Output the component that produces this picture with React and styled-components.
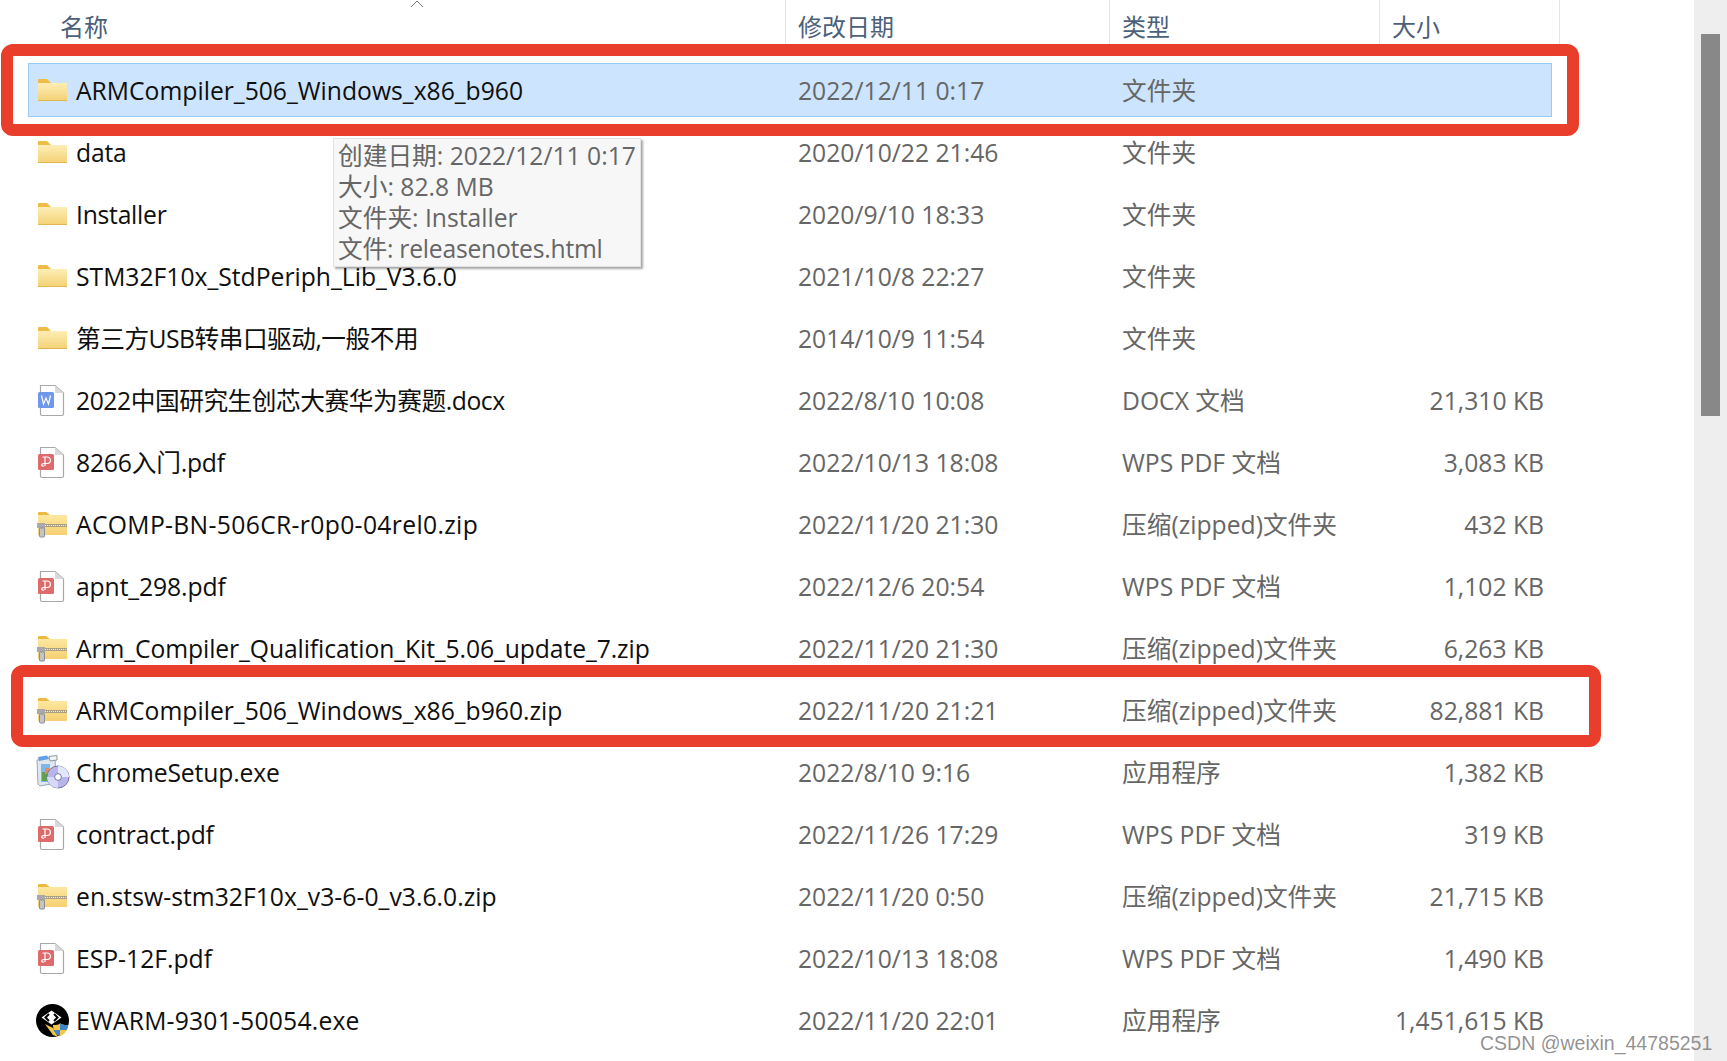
import React from 'react';
import styled, { createGlobalStyle } from 'styled-components';

const GlobalStyle = createGlobalStyle`
  html, body {
    margin: 0;
    padding: 0;
    background: #fff;
  }
`;

const Page = styled.div`
  position: relative;
  display: flex;
  width: 1727px;
  height: 1061px;
  overflow: hidden;
  background: #fff;
  font-family: "Open Sans", "Noto Sans CJK SC", sans-serif;
  font-size: 24.7px;
`;

const Explorer = styled.div`
  flex: 1;
  min-width: 0;
`;

const Header = styled.div`
  display: grid;
  grid-template-columns: 786px 324px 270px 180px;
  height: 44px;
  margin-bottom: 15px;
`;

const HeaderCell = styled.div`
  position: relative;
  display: flex;
  align-items: center;
  box-sizing: border-box;
  padding: 7px 0 0 ${(p) => p.$pad || 12}px;
  border-right: 1px solid #e5e5e5;
  color: #4c607a;
  font-size: 24px;
  white-space: nowrap;
`;

const SortCaret = styled.svg`
  position: absolute;
  left: 410px;
  top: 0;
  width: 14px;
  height: 8px;
`;

const List = styled.div`
  display: flex;
  flex-direction: column;
  gap: 8px;
  padding: 4px 0 0 28px;
`;

const Row = styled.div`
  display: grid;
  grid-template-columns: 38px 722px 324px 1fr auto;
  align-items: center;
  box-sizing: border-box;
  width: 1524px;
  height: 54px;
  padding: 0 7px 0 9px;
  border: 1px solid ${(p) => (p.$selected ? '#99c9f5' : 'transparent')};
  background: ${(p) => (p.$selected ? '#cce4fd' : 'transparent')};
  line-height: 36px;
`;

const IconSlot = styled.div`
  display: flex;
  align-items: center;
  height: 36px;
`;

const Name = styled.div`
  padding-top: 2px;
  color: #0f0f0f;
  letter-spacing: ${(p) => p.$tracking || 0}px;
  white-space: nowrap;
`;

const Meta = styled.div`
  padding-top: 2px;
  color: #666;
  white-space: nowrap;
`;

const ScrollTrack = styled.div`
  flex: none;
  width: 33px;
  padding: 34px 7px 0;
  box-sizing: border-box;
  background: #eeeeee;
`;

const ScrollThumb = styled.div`
  width: 19px;
  height: 382px;
  background: #888;
`;

const Annotation = styled.div`
  position: absolute;
  box-sizing: border-box;
  left: ${(p) => p.$left}px;
  top: ${(p) => p.$top}px;
  width: ${(p) => p.$width}px;
  height: ${(p) => p.$height}px;
  border: 12px solid #ea3e2d;
  border-radius: 12px;
`;

const Tooltip = styled.div`
  position: absolute;
  left: 333px;
  top: 138px;
  box-sizing: border-box;
  width: 308px;
  height: 129px;
  padding: 1px 0 0 4px;
  border: 1px solid #e2e2e2;
  background: #f7f7f7;
  box-shadow: 2px 2px 2px rgba(0, 0, 0, 0.35);
  color: #666;
  line-height: 31px;
  white-space: nowrap;
`;

const TooltipTight = styled.span`
  letter-spacing: -0.24px;
`;

const Watermark = styled.div`
  position: absolute;
  left: 1480px;
  top: 1031px;
  color: rgba(110, 110, 110, 0.75);
  font-family: "Liberation Sans", sans-serif;
  font-size: 19.5px;
  line-height: 24px;
  white-space: nowrap;
`;

const ShiftedSvg = styled.svg`
  flex: none;
  margin-left: ${(p) => p.$shift || 0}px;
`;

const FolderIcon = () => (
  <svg width="29" height="24" viewBox="0 0 29 24">
    <defs>
      <linearGradient id="folderBody" x1="0" y1="0" x2="0" y2="1">
        <stop offset="0" stopColor="#fdeeb5" />
        <stop offset="1" stopColor="#f4d175" />
      </linearGradient>
    </defs>
    <path d="M0 2 Q0 1 1 1 H9 L13 5 H29 V8 H0 Z" fill="#efbd46" />
    <rect x="0" y="5" width="29" height="18" fill="url(#folderBody)" />
    <rect x="0" y="22" width="29" height="1" fill="#e2b650" />
  </svg>
);

const ZipIcon = () => (
  <ShiftedSvg $shift={-1} width="30" height="27" viewBox="0 0 30 27">
    <defs>
      <linearGradient id="zipBody" x1="0" y1="0" x2="0" y2="1">
        <stop offset="0" stopColor="#fde7a0" />
        <stop offset="1" stopColor="#f5d070" />
      </linearGradient>
    </defs>
    <path d="M1 2 Q1 1 2 1 H9 L13 4 H30 V8 H1 Z" fill="#efb93f" />
    <rect x="1" y="4" width="29" height="20" fill="url(#zipBody)" />
    <rect x="5" y="13" width="25" height="3" fill="#a89f84" />
    <path d="M6 14.5 H30" stroke="#f5f1e4" strokeWidth="1" strokeDasharray="1 1" />
    <rect x="0" y="12" width="8" height="5" fill="#a9a9a9" />
    <rect x="2.5" y="17" width="5" height="9" rx="1" fill="#c4c4c4" stroke="#8e8e8e" />
  </ShiftedSvg>
);

const DocIcon = ({ color, children }) => (
  <svg width="28" height="33" viewBox="0 0 28 33">
    <path d="M2.5 1.5 H17 L25.5 9 V30 Q25.5 31.5 24 31.5 H4 Q2.5 31.5 2.5 30 Z" fill="#fff" stroke="#a8a8a8" strokeWidth="1.2" />
    <path d="M17 1.5 V9 H25.5 Z" fill="#d9d9d9" />
    <rect x="0" y="8" width="16" height="16" rx="1.5" fill={color} />
    {children}
  </svg>
);

const WordIcon = () => (
  <DocIcon color="#6f97ea">
    <path d="M3.5 11.5 L5.5 20 L8 14 L10.5 20 L12.5 11.5" fill="none" stroke="#fff" strokeWidth="1.2" />
  </DocIcon>
);

const PdfIcon = () => (
  <DocIcon color="#df6a6a">
    <path d="M6 20 C3 21 3 17.5 6 17.5 H9 C13.5 17.5 13.5 11 9 11 H4.5 M7 11 V20" fill="none" stroke="#fff" strokeWidth="1.2" />
  </DocIcon>
);

const SetupIcon = () => (
  <ShiftedSvg $shift={-2} width="34" height="34" viewBox="0 0 34 34">
    <path d="M1 5 L19 2 L20 28 L4 31 L2 29 Z" fill="#dfe7ef" stroke="#9aa7b4" />
    <path d="M2 2 L11 0.5 L13 4 L3 6 Z" fill="#5f9fe3" />
    <path d="M13 1.5 L21 0.5 L21 5 L14 6 Z" fill="#f3f5f7" stroke="#8a97a4" />
    <rect x="5" y="9" width="9" height="18" fill="#7fb8e8" />
    <rect x="6" y="17" width="6" height="9" fill="#5fa051" />
    <rect x="9" y="13" width="4" height="6" fill="#e28a62" />
    <circle cx="22" cy="22" r="11" fill="#b9b5ea" stroke="#6f78a6" />
    <path d="M22 11 A11 11 0 0 1 33 22 L22 22 Z" fill="#e4e6fb" />
    <path d="M22 33 A11 11 0 0 1 11 22 L22 22 Z" fill="#d7d8f5" />
    <circle cx="22" cy="22" r="3.4" fill="#fff" stroke="#6f78a6" />
  </ShiftedSvg>
);

const EwarmIcon = () => (
  <ShiftedSvg $shift={-2} width="33" height="33" viewBox="0 0 33 33">
    <circle cx="16.5" cy="16.5" r="16.5" fill="#000" />
    <path d="M15.5 6.5 L25.5 13.5 L15.5 20.5 L5.5 13.5 Z" fill="#fff" />
    <path d="M13 10 L9.5 13.5 L13 17 M18 10 L21.5 13.5 L18 17" fill="none" stroke="#000" strokeWidth="2" />
    <path d="M9 20 L17 24 L22 33 L17 31 Z" fill="#f2c64a" />
    <path d="M17 21 Q24 21 24 19 Q25 21 32 21 C32 26 29 30 24 32 C19 30 17 26 17 21 Z" fill="#f2c64a" />
    <path d="M24 19 Q25 21 32 21 C32 23 31.5 25 30.5 26 H24 Z M17.5 26 H24 V32 C21 31 18.5 29 17.5 26 Z" fill="#3f86cc" />
  </ShiftedSvg>
);

const icons = {
  folder: FolderIcon,
  zip: ZipIcon,
  word: WordIcon,
  pdf: PdfIcon,
  setup: SetupIcon,
  ewarm: EwarmIcon,
};

const files = [
  { icon: 'folder', name: 'ARMCompiler_506_Windows_x86_b960', date: '2022/12/11 0:17', type: '文件夹', selected: true },
  { icon: 'folder', name: 'data', date: '2020/10/22 21:46', type: '文件夹', tracking: -0.2 },
  { icon: 'folder', name: 'Installer', date: '2020/9/10 18:33', type: '文件夹', tracking: -0.24 },
  { icon: 'folder', name: 'STM32F10x_StdPeriph_Lib_V3.6.0', date: '2021/10/8 22:27', type: '文件夹' },
  { icon: 'folder', name: '第三方USB转串口驱动,一般不用', date: '2014/10/9 11:54', type: '文件夹', tracking: -0.5 },
  { icon: 'word', name: '2022中国研究生创芯大赛华为赛题.docx', date: '2022/8/10 10:08', type: 'DOCX 文档', size: '21,310 KB', tracking: -0.45 },
  { icon: 'pdf', name: '8266入门.pdf', date: '2022/10/13 18:08', type: 'WPS PDF 文档', size: '3,083 KB', tracking: -0.2 },
  { icon: 'zip', name: 'ACOMP-BN-506CR-r0p0-04rel0.zip', date: '2022/11/20 21:30', type: '压缩(zipped)文件夹', size: '432 KB', tracking: 0.33 },
  { icon: 'pdf', name: 'apnt_298.pdf', date: '2022/12/6 20:54', type: 'WPS PDF 文档', size: '1,102 KB', tracking: -0.1 },
  { icon: 'zip', name: 'Arm_Compiler_Qualification_Kit_5.06_update_7.zip', date: '2022/11/20 21:30', type: '压缩(zipped)文件夹', size: '6,263 KB', tracking: -0.09 },
  { icon: 'zip', name: 'ARMCompiler_506_Windows_x86_b960.zip', date: '2022/11/20 21:21', type: '压缩(zipped)文件夹', size: '82,881 KB' },
  { icon: 'setup', name: 'ChromeSetup.exe', date: '2022/8/10 9:16', type: '应用程序', size: '1,382 KB', tracking: -0.15 },
  { icon: 'pdf', name: 'contract.pdf', date: '2022/11/26 17:29', type: 'WPS PDF 文档', size: '319 KB', tracking: -0.2 },
  { icon: 'zip', name: 'en.stsw-stm32F10x_v3-6-0_v3.6.0.zip', date: '2022/11/20 0:50', type: '压缩(zipped)文件夹', size: '21,715 KB', tracking: 0.03 },
  { icon: 'pdf', name: 'ESP-12F.pdf', date: '2022/10/13 18:08', type: 'WPS PDF 文档', size: '1,490 KB' },
  { icon: 'ewarm', name: 'EWARM-9301-50054.exe', date: '2022/11/20 22:01', type: '应用程序', size: '1,451,615 KB', tracking: 0.2 },
];

const App = () => (
  <Page>
    <GlobalStyle />
    <Explorer>
      <Header>
        <HeaderCell $pad={60}>
          名称
          <SortCaret viewBox="0 0 14 8">
            <path d="M1 7 L7 1 L13 7" fill="none" stroke="#777" strokeWidth="1" />
          </SortCaret>
        </HeaderCell>
        <HeaderCell>修改日期</HeaderCell>
        <HeaderCell>类型</HeaderCell>
        <HeaderCell>大小</HeaderCell>
      </Header>
      <List>
        {files.map((file) => {
          const Icon = icons[file.icon];
          return (
            <Row key={file.name} $selected={file.selected}>
              <IconSlot>
                <Icon />
              </IconSlot>
              <Name $tracking={file.tracking}>{file.name}</Name>
              <Meta>{file.date}</Meta>
              <Meta>{file.type}</Meta>
              <Meta>{file.size}</Meta>
            </Row>
          );
        })}
      </List>
    </Explorer>
    <ScrollTrack>
      <ScrollThumb />
    </ScrollTrack>
    <Annotation $left={1} $top={44} $width={1578} $height={92} />
    <Annotation $left={11} $top={665} $width={1590} $height={82} />
    <Tooltip>
      创建日期: 2022/12/11 0:17
      <br />
      大小: 82.8 MB
      <br />
      文件夹: Installer
      <br />
      <TooltipTight>文件: releasenotes.html</TooltipTight>
    </Tooltip>
    <Watermark>CSDN @weixin_44785251</Watermark>
  </Page>
);

export default App;
